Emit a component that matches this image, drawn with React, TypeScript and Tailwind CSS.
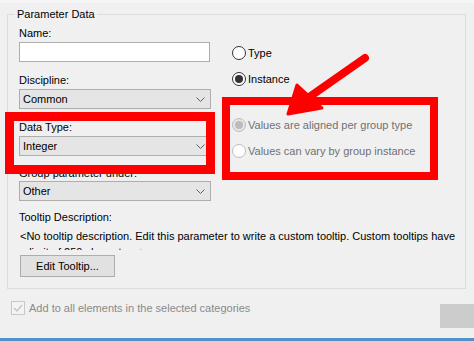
import React from "react";

const Chevron = () => (
  <svg width="9" height="5" viewBox="0 0 9 5" className="block">
    <path d="M0.5 0.5 L4.5 4.5 L8.5 0.5" fill="none" stroke="#606060" strokeWidth="1" />
  </svg>
);

const Dropdown = ({ value, className = "" }: { value: string; className?: string }) => (
  <div
    className={`flex h-[20px] w-[192px] items-center justify-between border border-[#adadad] bg-[#e5e5e5] pl-[3px] pr-[5px] text-[#000] ${className}`}
  >
    <span>{value}</span>
    <Chevron />
  </div>
);

const Radio = ({
  checked,
  disabled,
  label,
  className = "",
}: {
  checked?: boolean;
  disabled?: boolean;
  label: string;
  className?: string;
}) => (
  <div className={`flex h-[16px] items-center ${className}`}>
    <div
      className={`flex h-[14px] w-[14px] items-center justify-center rounded-full border ${
        disabled
          ? checked
            ? "border-[#bcbcbc] bg-[#e6e6e6]"
            : "border-[#bcbcbc] bg-white"
          : "border-[#333333] bg-white"
      }`}
    >
      {checked && (
        <div className={`h-[8px] w-[8px] rounded-full ${disabled ? "bg-[#bcbcbc]" : "bg-[#333333]"}`} />
      )}
    </div>
    <span className={`ml-[2px] ${disabled ? "text-[#707070]" : "text-black"}`}>{label}</span>
  </div>
);

export default function App() {
  return (
    <div
      className="relative h-[341px] w-[474px] overflow-hidden bg-[#f0f0f0] text-[11px] leading-[16px] text-black"
      style={{ fontFamily: '"Liberation Sans", Arial, sans-serif' }}
    >
      <div className="h-[3px] bg-[#f6f6f6]" />
      <div className="pt-[11px]">
        {/* Group box */}
        <div className="relative ml-[7px] h-[275px] w-[459px] border border-[#dcdcdc]">
          <div className="absolute left-[7px] top-[-9px] bg-[#f0f0f0] px-[2px]">Parameter Data</div>
          <div className="flex pl-[11px] pt-[10px]">
            {/* Left column */}
            <div className="flex w-[200px] flex-col">
              <div className="h-[16px]">Name:</div>
              <div className="mt-[1px] h-[20px] w-[191px] border border-[#adadad] bg-white" />
              <div className="mt-[10px] h-[16px]">Discipline:</div>
              <Dropdown value="Common" className="mt-[1px]" />
              <div className="mt-[10px] h-[16px]">Data Type:</div>
              <Dropdown value="Integer" className="mt-[1px]" />
              <div className="mt-[9px] h-[16px]">Group parameter under:</div>
              <Dropdown value="Other" className="mt-[0px]" />
              <div className="mt-[8px] h-[16px]">Tooltip Description:</div>
            </div>
            {/* Right column */}
            <div className="ml-[13px] flex flex-col pt-[20px]">
              <Radio label="Type" />
              <Radio label="Instance" checked className="mt-[10px]" />
              <Radio label="Values are aligned per group type" checked disabled className="mt-[30px]" />
              <Radio label="Values can vary by group instance" disabled className="mt-[10px]" />
            </div>
          </div>
          <div className="ml-[12px] mt-[3px] h-[22px] w-[445px] overflow-hidden whitespace-nowrap">
            <div>&lt;No tooltip description. Edit this parameter to write a custom tooltip. Custom tooltips have</div>
            <div>a limit of 250 characters.&gt;</div>
          </div>
          <div className="ml-[12px] mt-[5px] flex h-[22px] w-[95px] items-center justify-center border border-[#adadad] bg-[#e1e1e1]">
            Edit Tooltip...
          </div>
        </div>
        {/* Bottom row */}
        <div className="mt-[10px] flex items-start justify-between">
          <div className="ml-[11px] mt-[1px] flex items-center text-[#8a8a8a]">
            <div className="flex h-[14px] w-[14px] items-center justify-center border border-[#c8c8c8] bg-[#f4f4f4]">
              <svg width="10" height="8" viewBox="0 0 10 8">
                <path d="M1 4 L4 7 L9 1" fill="none" stroke="#c4c4c4" strokeWidth="1.3" />
              </svg>
            </div>
            <span className="ml-[4px]">Add to all elements in the selected categories</span>
          </div>
          <div className="mt-[5px] h-[24px] w-[34px] bg-[#cccccc]" />
        </div>
      </div>
      <div className="absolute bottom-0 left-0 h-[3px] w-full bg-[#4f93c9]" />

      {/* Annotations */}
      <div className="absolute left-[5px] top-[112px] h-[62px] w-[210px] border-[9px] border-[#ff0000]" />
      <div className="absolute left-[222px] top-[97px] h-[83px] w-[216px] border-[8px] border-[#ff0000]" />
      <svg className="absolute left-0 top-0" width="474" height="341" viewBox="0 0 474 341">
        <line x1="365" y1="58" x2="305" y2="100" stroke="#ff0000" strokeWidth="8" strokeLinecap="round" />
        <polygon points="288,114 297,85 322,108" fill="#ff0000" stroke="#ff0000" strokeWidth="3" strokeLinejoin="round" />
      </svg>
    </div>
  );
}
